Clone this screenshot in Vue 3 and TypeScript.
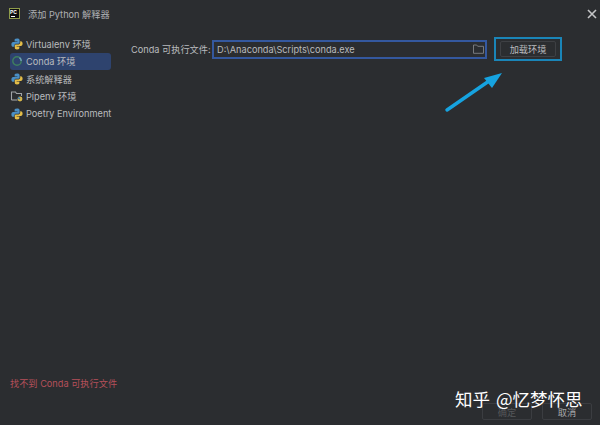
<script setup lang="ts">
const envs = [
  { name: 'Virtualenv 环境', icon: 'venv' },
  { name: 'Conda 环境', icon: 'conda', active: true },
  { name: '系统解释器', icon: 'python' },
  { name: 'Pipenv 环境', icon: 'pipenv' },
  { name: 'Poetry Environment', icon: 'venv' },
]
</script>

<template>
  <div class="dialog">
    <header class="titlebar">
      <div class="pc-logo"><span>PC</span><i></i></div>
      <span class="title">添加 Python 解释器</span>
      <svg class="close" width="10" height="10" viewBox="0 0 10 10">
        <path d="M1 1 9 9M9 1 1 9" stroke="#c4c5c7" stroke-width="1.6" />
      </svg>
    </header>

    <div class="body">
      <aside class="sidebar">
        <ul class="env-list">
          <li v-for="env in envs" :key="env.name" class="env" :class="{ active: env.active }">
            <svg class="env-icon" width="14" height="14" viewBox="0 0 14 14">
              <template v-if="env.icon === 'conda'">
                <circle cx="7" cy="7" r="4.2" fill="none" stroke="#3f7f5f" stroke-width="1.4" />
                <path d="M9.5 3.6A4.2 4.2 0 0 1 11.2 7" fill="none" stroke="#6f9fb8" stroke-width="1.4" />
              </template>
              <template v-else-if="env.icon === 'pipenv'">
                <path d="M1.5 11V3h4l1 1.5h5V7" fill="none" stroke="#a0a3a6" stroke-width="1.1" />
                <path d="M1.5 11h6" stroke="#a0a3a6" stroke-width="1.1" />
                <circle cx="10" cy="10" r="2.4" fill="#d9b84a" />
                <path d="M8 8.5 10 10" stroke="#3d7fb0" stroke-width="1.6" />
              </template>
              <template v-else>
                <path d="M7 1.5C4.8 1.5 4.6 2.4 4.6 3.2V4.4H7.4V5H3.2C2 5 1.4 6 1.4 7.4S2 9.8 3.2 9.8H4.4V8.4C4.4 7.3 5.2 6.8 6 6.8H8.4C9.2 6.8 9.6 6.2 9.6 5.6V3.2C9.6 2.2 8.8 1.5 7 1.5Z" fill="#4a8fc4" />
                <path d="M7 12.5C9.2 12.5 9.4 11.6 9.4 10.8V9.6H6.6V9H10.8C12 9 12.6 8 12.6 6.6S12 4.2 10.8 4.2H10.2V5.6C10.2 6.7 9.4 7.4 8.6 7.4H6C5.2 7.4 4.8 7.9 4.8 8.5V10.8C4.8 11.8 5.4 12.5 7 12.5Z" fill="#e3bd48" />
              </template>
            </svg>
            <span>{{ env.name }}</span>
          </li>
        </ul>
        <p class="error">找不到 Conda 可执行文件</p>
      </aside>

      <main class="content">
        <div class="form-row">
          <label class="label">Conda 可执行文件:</label>
          <div class="path-input">
            <span>D:\Anaconda\Scripts\conda.exe</span>
            <svg width="11" height="10" viewBox="0 0 11 10">
              <path d="M.5 1h3.2l1 1.3h5.8v7H.5Z" fill="none" stroke="#77797c" stroke-width="1" />
            </svg>
          </div>
          <div class="load-highlight">
            <button class="load-btn">加载环境</button>
          </div>
        </div>

        <svg class="arrow" width="64" height="50" viewBox="0 0 64 50">
          <path d="M5 40 47 11" stroke="#16a3e0" stroke-width="3.4" stroke-linecap="round" />
          <path d="M60 3 42 8 50 18Z" fill="#16a3e0" />
        </svg>
      </main>
    </div>

    <footer class="footer">
      <button class="dlg-btn ok">确定</button>
      <button class="dlg-btn">取消</button>
      <div class="watermark">知乎 @忆梦怀思</div>
    </footer>
  </div>
</template>

<style scoped>
.dialog {
  width: 600px;
  height: 425px;
  background: #2b2d30;
  display: flex;
  flex-direction: column;
  position: relative;
  overflow: hidden;
  font-family: Inter, "Noto Sans CJK SC", sans-serif;
  color: #b9bbbe;
  font-size: 9.2px;
}
.titlebar {
  height: 27px;
  display: flex;
  align-items: center;
  padding: 0 3px 0 9px;
  flex: none;
}
.pc-logo {
  width: 9px;
  height: 9px;
  background: #0d0e10;
  border: 1px solid #8f9c4a;
  color: #fff;
  font-size: 5px;
  font-weight: 700;
  line-height: 6px;
  position: relative;
  overflow: hidden;
  margin-top: -1px;
}
.pc-logo i {
  position: absolute;
  left: 1px;
  bottom: 1px;
  width: 4px;
  height: 1px;
  background: #fff;
}
.title {
  margin-left: 8px;
  flex: 1;
  color: #aeb0b3;
}
.body {
  flex: 1;
  display: flex;
  min-height: 0;
}
.sidebar {
  width: 120px;
  flex: none;
  padding: 8px 0 0 10px;
  box-sizing: border-box;
  display: flex;
  flex-direction: column;
}
.env-list {
  list-style: none;
  margin: 0;
  padding: 0;
}
.env {
  height: 17.5px;
  width: 101px;
  display: flex;
  align-items: center;
  gap: 2px;
  white-space: nowrap;
  border-radius: 3px;
  box-sizing: border-box;
}
.env.active {
  background: #2e436e;
}
.env-icon {
  flex: none;
}
.error {
  margin: auto 0 0;
  padding-bottom: 2px;
  color: #b5505a;
  white-space: nowrap;
}
.content {
  flex: 1;
  padding: 10px 0 0 11px;
  min-width: 0;
}
.form-row {
  display: flex;
  align-items: center;
}
.label {
  white-space: nowrap;
  width: 81px;
  flex: none;
}
.path-input {
  width: 275px;
  height: 19px;
  border: 2px solid #34589f;
  display: flex;
  align-items: center;
  justify-content: space-between;
  padding: 0 1px 0 3px;
  flex: none;
  box-sizing: border-box;
}
.load-highlight {
  margin-left: 7px;
  width: 68px;
  height: 24px;
  border: 2px solid #1a85b8;
  box-sizing: border-box;
  display: flex;
  align-items: center;
  justify-content: center;
}
.load-btn {
  width: 56px;
  height: 16px;
  background: #2b2d30;
  border: 1px solid #3e4044;
  border-radius: 2px;
  color: #b9bbbe;
  font: inherit;
  padding: 0;
}
.arrow {
  display: block;
  margin: 9px 0 0 311px;
}
.footer {
  height: 33px;
  flex: none;
  display: flex;
  justify-content: flex-end;
  align-items: center;
  gap: 10px;
  padding: 6px 8px 0 0;
  box-sizing: border-box;
  position: relative;
}
.dlg-btn {
  width: 50px;
  height: 17px;
  background: transparent;
  border: 1px solid #3b3d41;
  border-radius: 2px;
  color: #a6a8ab;
  font: inherit;
  padding: 0;
}
.dlg-btn.ok {
  color: #55575a;
}
.watermark {
  position: absolute;
  left: 455px;
  top: -5px;
  font-size: 17.5px;
  word-spacing: 2px;
  color: #fff;
  white-space: nowrap;
  font-family: "Noto Sans CJK SC", sans-serif;
  line-height: 24px;
}
</style>
